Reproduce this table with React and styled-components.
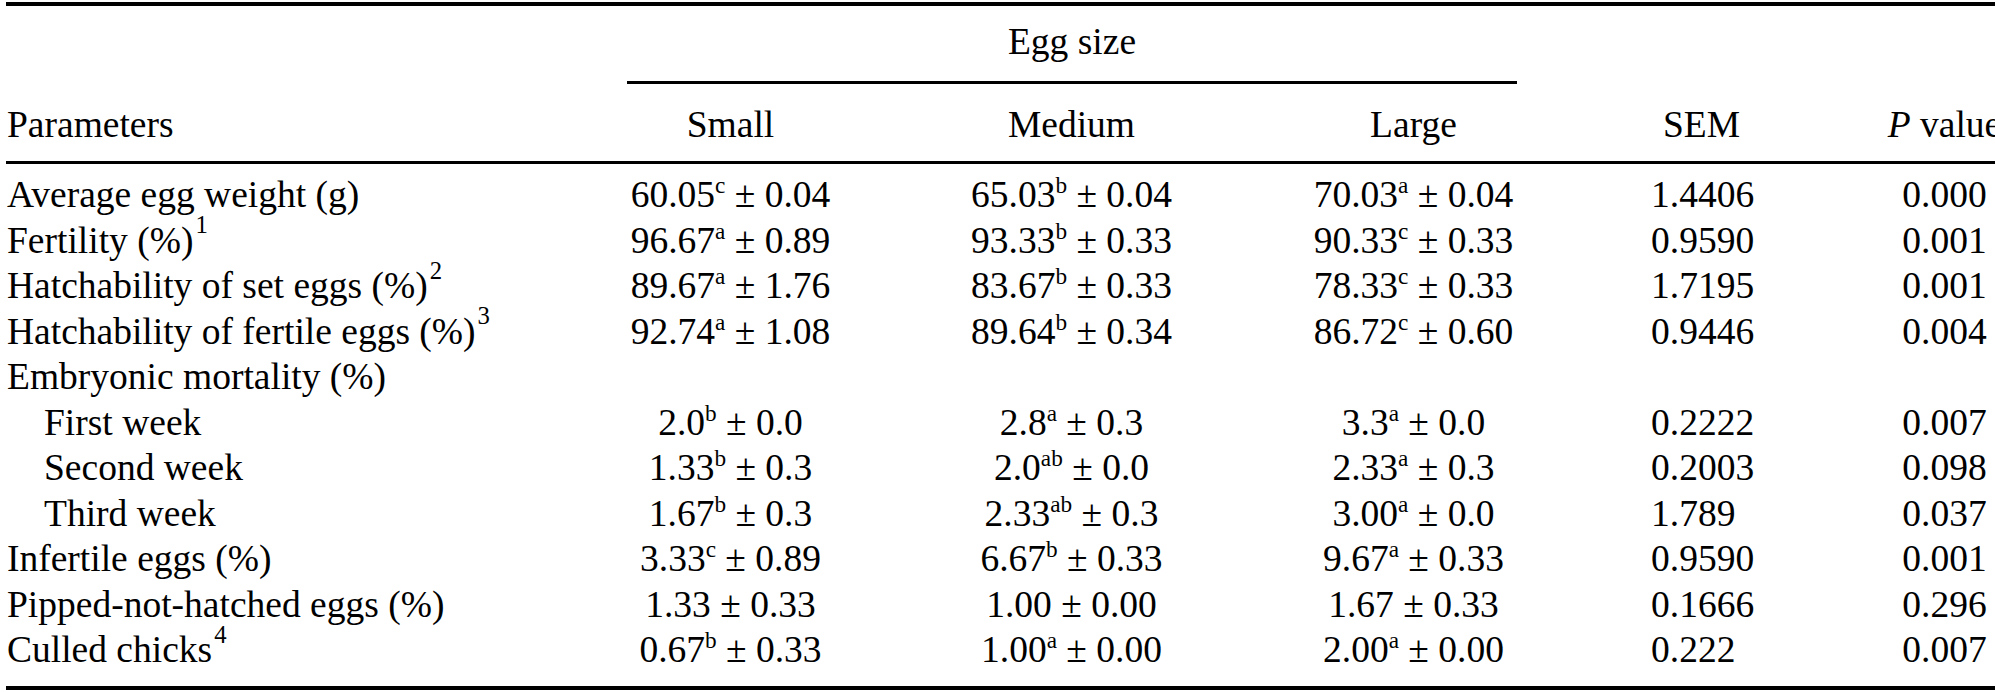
import React from 'react'
import styled, { createGlobalStyle } from 'styled-components'

const COLS = '621px 206px 476px 208px 368px 118px'

const rows = [
    { label: 'Average egg weight (g)', small: ['60.05', 'c', '0.04'], medium: ['65.03', 'b', '0.04'], large: ['70.03', 'a', '0.04'], sem: '1.4406', p: '0.000' },
    { label: 'Fertility (%)', note: '1', small: ['96.67', 'a', '0.89'], medium: ['93.33', 'b', '0.33'], large: ['90.33', 'c', '0.33'], sem: '0.9590', p: '0.001' },
    { label: 'Hatchability of set eggs (%)', note: '2', small: ['89.67', 'a', '1.76'], medium: ['83.67', 'b', '0.33'], large: ['78.33', 'c', '0.33'], sem: '1.7195', p: '0.001' },
    { label: 'Hatchability of fertile eggs (%)', note: '3', small: ['92.74', 'a', '1.08'], medium: ['89.64', 'b', '0.34'], large: ['86.72', 'c', '0.60'], sem: '0.9446', p: '0.004' },
    { label: 'Embryonic mortality (%)' },
    { label: 'First week', sub: true, small: ['2.0', 'b', '0.0'], medium: ['2.8', 'a', '0.3'], large: ['3.3', 'a', '0.0'], sem: '0.2222', p: '0.007' },
    { label: 'Second week', sub: true, small: ['1.33', 'b', '0.3'], medium: ['2.0', 'ab', '0.0'], large: ['2.33', 'a', '0.3'], sem: '0.2003', p: '0.098' },
    { label: 'Third week', sub: true, small: ['1.67', 'b', '0.3'], medium: ['2.33', 'ab', '0.3'], large: ['3.00', 'a', '0.0'], sem: '1.789', p: '0.037' },
    { label: 'Infertile eggs (%)', small: ['3.33', 'c', '0.89'], medium: ['6.67', 'b', '0.33'], large: ['9.67', 'a', '0.33'], sem: '0.9590', p: '0.001' },
    { label: 'Pipped-not-hatched eggs (%)', small: ['1.33', '', '0.33'], medium: ['1.00', '', '0.00'], large: ['1.67', '', '0.33'], sem: '0.1666', p: '0.296' },
    { label: 'Culled chicks', note: '4', small: ['0.67', 'b', '0.33'], medium: ['1.00', 'a', '0.00'], large: ['2.00', 'a', '0.00'], sem: '0.222', p: '0.007' },
]

const Mean = ({ value }) => {
    if (!value) return null
    const [m, letter, se] = value
    return (
        <>
            {m}
            {letter && <Sup>{letter}</Sup>} ± {se}
        </>
    )
}

const App = () => {
    return (
        <>
            <GlobalStyle />
            <Table>
                <GroupRow>
                    <GroupLabel>Egg size</GroupLabel>
                </GroupRow>
                <HeadRow>
                    <Cell>Parameters</Cell>
                    <Cell align='center'>Small</Cell>
                    <Cell align='center'>Medium</Cell>
                    <Cell align='center'>Large</Cell>
                    <Cell align='center'>SEM</Cell>
                    <Cell align='center'><i>P</i> value</Cell>
                </HeadRow>
                <Body>
                    {rows.map(r => (
                        <Row key={r.label}>
                            <Cell indent={r.sub ? 37 : 0}>
                                {r.label}
                                {r.note && <Sup note>{r.note}</Sup>}
                            </Cell>
                            <Cell align='center'><Mean value={r.small} /></Cell>
                            <Cell align='center'><Mean value={r.medium} /></Cell>
                            <Cell align='center'><Mean value={r.large} /></Cell>
                            <Cell indent={133}>{r.sem}</Cell>
                            <Cell align='center'>{r.p}</Cell>
                        </Row>
                    ))}
                </Body>
            </Table>
        </>
    )
}

export default App

const GlobalStyle = createGlobalStyle`
    html, body {
        margin: 0;
        background: #ffffff;
        overflow: hidden;
    }
`

const Table = styled.div`
    width: 1997px;
    margin: 2px 0 0 6px;
    border-top: 4px solid #000;
    border-bottom: 4px solid #000;
    font-family: "Liberation Serif", "Times New Roman", serif;
    font-size: 37.5px;
    line-height: 45.5px;
    color: #000;
`

const Row = styled.div`
    display: grid;
    grid-template-columns: ${COLS};
`

const GroupRow = styled(Row)`
    padding-top: 13px;
`

const GroupLabel = styled.div`
    grid-column: 2 / 5;
    text-align: center;
    padding-bottom: 16.5px;
    border-bottom: 3px solid #000;
`

const HeadRow = styled(Row)`
    padding: 17.5px 0 14px;
    border-bottom: 3px solid #000;
`

const Body = styled.div`
    padding: 8px 0 13.5px;
`

const Cell = styled.div`
    text-align: ${p => p.align || 'left'};
    padding-left: ${p => (p.indent || 0) + 1}px;
    white-space: nowrap;

    i {
        font-style: italic;
    }
`

const Sup = styled.sup`
    font-size: ${p => (p.note ? '0.66em' : '0.62em')};
    line-height: 0;
    vertical-align: ${p => (p.note ? '0.78em' : '0.62em')};
    margin-left: ${p => (p.note ? '2px' : '0')};
`
